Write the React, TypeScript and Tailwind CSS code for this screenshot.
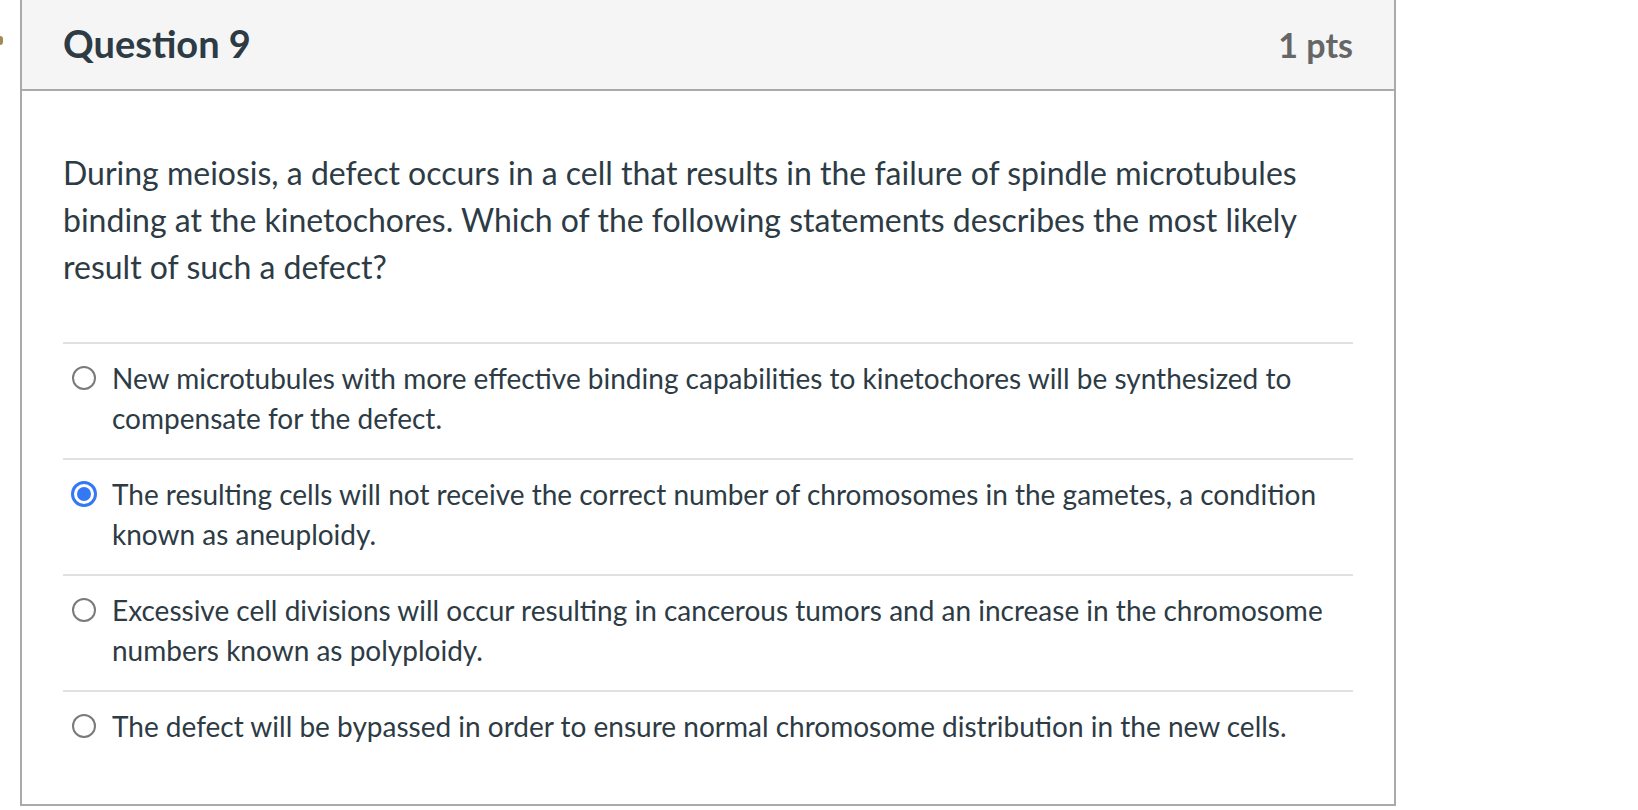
const answers = [
  {
    id: "a1",
    text: "New microtubules with more effective binding capabilities to kinetochores will be synthesized to compensate for the defect.",
    selected: false,
  },
  {
    id: "a2",
    text: "The resulting cells will not receive the correct number of chromosomes in the gametes, a condition known as aneuploidy.",
    selected: true,
  },
  {
    id: "a3",
    text: "Excessive cell divisions will occur resulting in cancerous tumors and an increase in the chromosome numbers known as polyploidy.",
    selected: false,
  },
  {
    id: "a4",
    text: "The defect will be bypassed in order to ensure normal chromosome distribution in the new cells.",
    selected: false,
  },
];

const Radio = ({ checked }: { checked: boolean }) =>
  checked ? (
    <span className="mt-[7px] flex h-[26px] w-[26px] shrink-0 items-center justify-center rounded-full border-[3px] border-[#3478f6] bg-white">
      <span className="h-[14px] w-[14px] rounded-full bg-[#3478f6]" />
    </span>
  ) : (
    <span className="mt-[8px] ml-[1px] mr-[1px] h-[24px] w-[24px] shrink-0 rounded-full border-2 border-[#7a7a7a] bg-white" />
  );

export default function App() {
  return (
    <div
      className="relative min-h-screen bg-white text-[#2d3b45]"
      style={{ fontFamily: "Lato, 'Open Sans', sans-serif" }}
    >
      <span className="absolute left-[-3px] top-[36px] h-[9px] w-[6px] rounded-full bg-[#a08a55]" />
      <div className="ml-[20px] w-[1376px] border-2 border-t-0 border-[#aaaaaa]">
        <header className="flex h-[91px] items-baseline justify-between border-b-2 border-[#aaaaaa] bg-[#f5f5f5] px-[41px] pt-[18px]">
          <h2 className="text-[38px] font-bold leading-[50px]">Question 9</h2>
          <span className="text-[34px] font-bold leading-[50px] text-[#666666]">1 pts</span>
        </header>

        <div className="px-[41px] pt-[58px] pb-[38px]">
          <p className="text-[32px] leading-[47px]">
            During meiosis, a defect occurs in a cell that results in the failure of spindle microtubules
            binding at the kinetochores. Which of the following statements describes the most likely
            result of such a defect?
          </p>

          <div className="mt-[52px]">
            {answers.map((a) => (
              <label
                key={a.id}
                className="flex gap-[15px] border-t-2 border-[#e0e0e0] pl-[8px] pt-[14px] pb-[20px]"
              >
                <Radio checked={a.selected} />
                <span className="text-[28px] leading-[40px]">{a.text}</span>
              </label>
            ))}
          </div>
        </div>
      </div>
    </div>
  );
}
